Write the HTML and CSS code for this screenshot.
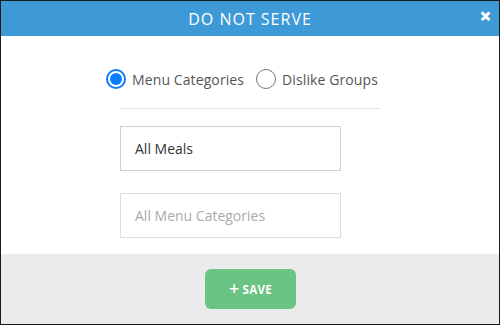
FILE: index.html
```html
<!DOCTYPE html>
<html>
<head>
<meta charset="utf-8">
<link rel="stylesheet" href="styles.css">
</head>
<body>
<div class="modal">
  <div class="header">
    <div class="title">DO NOT SERVE</div>
    <div class="close">&#x2715;</div>
  </div>
  <div class="content">
    <div class="radios">
      <label class="radio"><span class="dot checked"></span><span class="rlabel">Menu Categories</span></label>
      <label class="radio"><span class="dot"></span><span class="rlabel">Dislike Groups</span></label>
    </div>
    <div class="divider"></div>
    <div class="field">All Meals</div>
    <div class="field placeholder">All Menu Categories</div>
  </div>
  <div class="footer">
    <div class="save"><span class="plus">+</span>SAVE</div>
  </div>
</div>
</body>
</html>
```
FILE: styles.css
```css
* { box-sizing: border-box; }
html, body { margin: 0; padding: 0; }
body { font-family: "Open Sans", "Liberation Sans", sans-serif; background: #fff; }
.modal {
  width: 500px; height: 325px;
  border: 1px solid #1a1a1a;
  display: flex; flex-direction: column;
  background: #fff;
}
.header {
  height: 35px; background: #3d9ad6;
  position: relative;
  display: flex; align-items: center; justify-content: center;
}
.title {
  color: #fff; font-size: 16px; letter-spacing: 1px;
  font-family: "Open Sans", sans-serif; font-weight: 400;
  padding-top: 1px;
}
.close {
  position: absolute; right: 8px; top: 8px;
  color: #fff; font-size: 13px; font-weight: 700;
  font-family: "DejaVu Sans", sans-serif;
  -webkit-text-stroke: 1.4px #fff;
}
.content {
  flex: 1;
  display: flex; flex-direction: column; align-items: center;
  padding-top: 33px;
}
.radios {
  display: flex; gap: 12px; align-items: center;
  margin-right: 16px;
}
.radio { display: flex; align-items: center; gap: 6px; color: #555; font-size: 14px; letter-spacing: 0.1px; }
.dot {
  width: 20px; height: 20px; border-radius: 50%;
  border: 1.5px solid #777; background: #fff;
  display: inline-block; position: relative;
}
.dot.checked { border: 2px solid #0a7cff; }
.dot.checked::after {
  content: ""; position: absolute; left: 2px; top: 2px;
  width: 12px; height: 12px; border-radius: 50%; background: #0a7cff;
}
.divider {
  width: 260px; height: 1px; background: #e2e2e2;
  margin-top: 19px;
}
.field {
  width: 221px; height: 45px;
  margin-right: 39px;
  border: 1px solid #cfcfcf;
  margin-top: 17px;
  padding-left: 14px;
  display: flex; align-items: center;
  font-size: 14px; color: #333;
}
.field.placeholder { color: #aaa; border-color: #dedede; margin-top: 22px; }
.footer {
  height: 70px; background: #ebebeb;
  display: flex; justify-content: center; align-items: flex-start;
  padding-top: 15px;
}
.save {
  width: 91px; height: 40px; border-radius: 6px;
  background: #6bc384; color: #fff;
  font-size: 11.5px; font-weight: 700;
  display: flex; align-items: center; justify-content: center;
  letter-spacing: 0.3px;
  margin-left: 1px;
}
.plus { font-size: 18px; font-weight: 600; margin-right: 3px; line-height: 1; margin-top: -2px; }
```
